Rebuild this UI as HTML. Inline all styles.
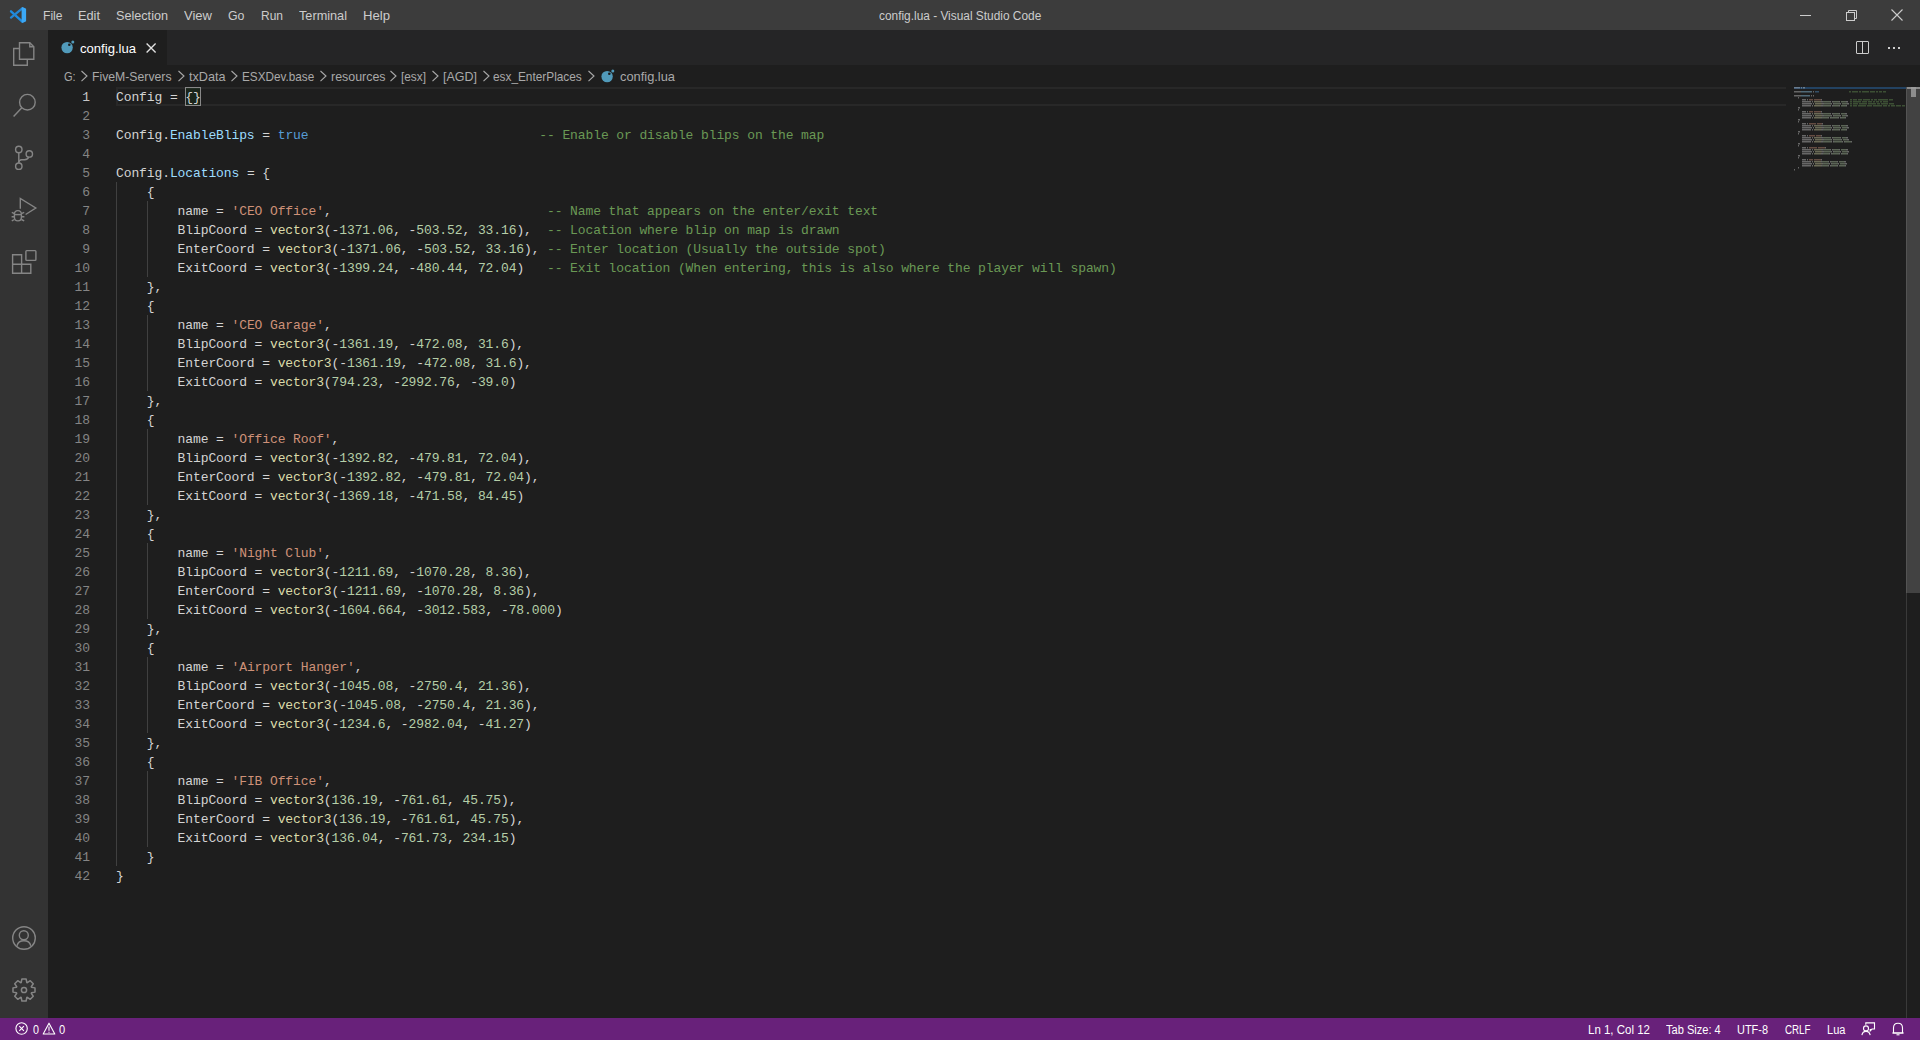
<!DOCTYPE html><html><head><meta charset="utf-8"><style>
*{margin:0;padding:0;box-sizing:border-box}
html,body{width:1920px;height:1040px;overflow:hidden;background:#1e1e1e}
body{position:relative;font-family:"Liberation Sans",sans-serif}
.abs{position:absolute}
.ui{position:absolute;white-space:pre;line-height:1;transform-origin:0 0;font-family:"Liberation Sans",sans-serif}
.code{position:absolute;left:116px;padding-top:1px;white-space:pre;font-family:"Liberation Mono",monospace;font-size:13px;letter-spacing:-0.103px;line-height:19px;height:19px;color:#d4d4d4}
.ln{position:absolute;padding-top:1px;width:40px;left:50px;text-align:right;font-family:"Liberation Mono",monospace;font-size:13px;letter-spacing:-0.103px;line-height:19px;color:#858585}
svg{position:absolute;overflow:visible}
</style></head><body>
<div class="abs" style="left:0;top:0;width:1920px;height:30px;background:#3c3c3c"></div>
<svg style="left:6px;top:3px" width="24" height="24" viewBox="6 3 24 24">
<path d="M11 11.3 L22 21.3" stroke="#1d8ce3" stroke-width="2.3" stroke-linecap="round"/>
<path d="M11 17.6 L22 8.6" stroke="#2487d4" stroke-width="2.3" stroke-linecap="round"/>
<path d="M21.6 7.4 L22.6 7 L26.1 8.7 V21.3 L22.6 23 L21.6 22.6 Z" fill="#3ba8f6"/>
</svg>
<span id="m0" class="ui" style="left:43.00px;top:9.00px;font-size:13px;color:#cccccc;font-weight:normal;transform:scaleX(0.9306);">File</span>
<span id="m1" class="ui" style="left:78.00px;top:9.00px;font-size:13px;color:#cccccc;font-weight:normal;transform:scaleX(0.9819);">Edit</span>
<span id="m2" class="ui" style="left:116.00px;top:9.00px;font-size:13px;color:#cccccc;font-weight:normal;transform:scaleX(0.9722);">Selection</span>
<span id="m3" class="ui" style="left:184.00px;top:9.00px;font-size:13px;color:#cccccc;font-weight:normal;transform:scaleX(1.0017);">View</span>
<span id="m4" class="ui" style="left:227.50px;top:9.00px;font-size:13px;color:#cccccc;font-weight:normal;transform:scaleX(0.9514);">Go</span>
<span id="m5" class="ui" style="left:260.50px;top:9.00px;font-size:13px;color:#cccccc;font-weight:normal;transform:scaleX(0.9221);">Run</span>
<span id="m6" class="ui" style="left:299.00px;top:9.00px;font-size:13px;color:#cccccc;font-weight:normal;transform:scaleX(0.9771);">Terminal</span>
<span id="m7" class="ui" style="left:363.00px;top:9.00px;font-size:13px;color:#cccccc;font-weight:normal;transform:scaleX(1.0093);">Help</span>
<span id="title" class="ui" style="left:878.75px;top:10.00px;font-size:12px;color:#cccccc;font-weight:normal;transform:scaleX(0.9900);">config.lua - Visual Studio Code</span>
<div class="abs" style="left:1800px;top:15px;width:11px;height:1px;background:#cccccc"></div>
<svg style="left:1845px;top:9px" width="13" height="13" viewBox="0 0 13 13" fill="none" stroke="#cccccc" stroke-width="1">
<rect x="1.5" y="3.5" width="8" height="8"/><path d="M3.5 3.5 V1.5 H11.5 V9.5 H9.5"/></svg>
<svg style="left:1891px;top:9px" width="13" height="13" viewBox="0 0 13 13" fill="none" stroke="#cccccc" stroke-width="1.1">
<path d="M0.5 0.5 L11.5 11.5 M11.5 0.5 L0.5 11.5"/></svg>
<div class="abs" style="left:0;top:30px;width:48px;height:988px;background:#333333"></div>
<svg style="left:12px;top:42px" width="24" height="24" viewBox="0 0 24 24" fill="none" stroke="#858585" stroke-width="1.4">
<path d="M7.5 6.5 H1.7 V23.3 H15.3 V17.3"/><path d="M7.5 0.7 V17.3 H21.8 V4.7 L17.8 0.7 Z"/><path d="M17.8 0.7 V4.7 H21.8" /></svg>
<svg style="left:12px;top:94px" width="24" height="24" viewBox="0 0 24 24" fill="none" stroke="#858585" stroke-width="1.4">
<circle cx="15.4" cy="8.2" r="7.8"/><path d="M9.8 13.8 L1.6 22.6" stroke-width="1.4"/></svg>
<svg style="left:8px;top:136px" width="32" height="40" viewBox="0 0 32 40" fill="none" stroke="#858585" stroke-width="1.4">
<circle cx="10.8" cy="13.5" r="3.2"/><circle cx="21.3" cy="17.9" r="3.2"/><circle cx="10.8" cy="30.2" r="3.2"/>
<path d="M10.8 16.7 V27"/><path d="M20.8 21 Q20 23.5 16.5 23.8 H13.5 Q11.2 24 10.8 26.5"/></svg>
<svg style="left:8px;top:190px" width="32" height="40" viewBox="0 0 32 40" fill="none" stroke="#858585" stroke-width="1.4">
<path d="M12.3 18.8 V8.5 L27.8 18 L17.6 24.5"/>
<path d="M6.4 24.5 Q6.4 20.6 9.9 20.6 Q13.4 20.6 13.4 24.5 V27.3 Q13.4 30.9 9.9 30.9 Q6.4 30.9 6.4 27.3 Z"/>
<path d="M6.4 24.6 H13.4"/><path d="M3.8 22.3 L6.4 23.6 M16.2 22.3 L13.4 23.6 M3.6 26.8 H6.4 M13.4 26.8 H16.4 M3.8 30.9 L6.4 29.5 M16.2 30.9 L13.4 29.5"/></svg>
<svg style="left:8px;top:242px" width="32" height="40" viewBox="0 0 32 40" fill="none" stroke="#858585" stroke-width="1.4">
<path d="M4.6 12.8 H13.6 V22.3 H22.8 V31.2 H4.6 Z"/><path d="M4.6 22.3 H13.6 V31.2"/>
<rect x="17.9" y="8.6" width="10" height="9.8" rx="0.8"/></svg>
<svg style="left:12px;top:926px" width="24" height="24" viewBox="0 0 24 24" fill="none" stroke="#858585" stroke-width="1.4">
<circle cx="12" cy="12" r="11.3"/><circle cx="11.8" cy="9.3" r="4.5"/><path d="M5 19.7 Q6.3 14.8 11.9 14.8 Q17.5 14.8 18.8 19.7"/></svg>
<svg style="left:12px;top:978px" width="24" height="24" viewBox="0 0 24 24" fill="none" stroke="#858585" stroke-width="1.5">
<path d="M9.18 4.51 L9.88 1.00 L14.12 1.00 L14.82 4.51 L15.30 4.71 L18.28 2.73 L21.27 5.72 L19.29 8.70 L19.49 9.18 L23.00 9.88 L23.00 14.12 L19.49 14.82 L19.29 15.30 L21.27 18.28 L18.28 21.27 L15.30 19.29 L14.82 19.49 L14.12 23.00 L9.88 23.00 L9.18 19.49 L8.70 19.29 L5.72 21.27 L2.73 18.28 L4.71 15.30 L4.51 14.82 L1.00 14.12 L1.00 9.88 L4.51 9.18 L4.71 8.70 L2.73 5.72 L5.72 2.73 L8.70 4.71 Z" stroke-linejoin="round"/><circle cx="12" cy="12" r="2.6"/></svg>
<div class="abs" style="left:48px;top:30px;width:1872px;height:35px;background:#252526"></div>
<div class="abs" style="left:48px;top:30px;width:119px;height:35px;background:#1e1e1e"></div>
<svg style="left:61px;top:40px" width="14" height="14" viewBox="0 0 14 14">
<circle cx="6.1" cy="7.6" r="5.7" fill="#519aba"/><circle cx="8.3" cy="4.8" r="1.3" fill="#1e1e1e"/><circle cx="11.8" cy="1.9" r="1.5" fill="#519aba"/></svg>
<span id="tabname" class="ui" style="left:80.00px;top:42.00px;font-size:13px;color:#ffffff;font-weight:normal;transform:scaleX(1.0062);">config.lua</span>
<svg style="left:145px;top:42px" width="12" height="12" viewBox="0 0 12 12" fill="none" stroke="#e0e0e0" stroke-width="1.35">
<path d="M1.6 1.6 L10.6 10.6 M10.6 1.6 L1.6 10.6"/></svg>
<svg style="left:1855px;top:40px" width="15" height="15" viewBox="0 0 15 15" fill="none" stroke="#cccccc" stroke-width="1">
<rect x="1.5" y="1.5" width="12" height="12" rx="0.5"/><path d="M7.5 1.5 V13.5"/></svg>
<div class="abs" style="left:1888px;top:47px;width:2px;height:2px;background:#cccccc"></div>
<div class="abs" style="left:1893px;top:47px;width:2px;height:2px;background:#cccccc"></div>
<div class="abs" style="left:1898px;top:47px;width:2px;height:2px;background:#cccccc"></div>
<span id="bc0" class="ui" style="left:64.00px;top:70.00px;font-size:13px;color:#a9a9a9;font-weight:normal;transform:scaleX(0.8519);">G:</span>
<span id="bc1" class="ui" style="left:92.30px;top:70.00px;font-size:13px;color:#a9a9a9;font-weight:normal;transform:scaleX(0.9407);">FiveM-Servers</span>
<span id="bc2" class="ui" style="left:188.50px;top:70.00px;font-size:13px;color:#a9a9a9;font-weight:normal;transform:scaleX(0.9713);">txData</span>
<span id="bc3" class="ui" style="left:241.80px;top:70.00px;font-size:13px;color:#a9a9a9;font-weight:normal;transform:scaleX(0.9029);">ESXDev.base</span>
<span id="bc4" class="ui" style="left:330.70px;top:70.00px;font-size:13px;color:#a9a9a9;font-weight:normal;transform:scaleX(0.9548);">resources</span>
<span id="bc5" class="ui" style="left:401.00px;top:70.00px;font-size:13px;color:#a9a9a9;font-weight:normal;transform:scaleX(0.9101);">[esx]</span>
<span id="bc6" class="ui" style="left:443.00px;top:70.00px;font-size:13px;color:#a9a9a9;font-weight:normal;transform:scaleX(0.9603);">[AGD]</span>
<span id="bc7" class="ui" style="left:493.00px;top:70.00px;font-size:13px;color:#a9a9a9;font-weight:normal;transform:scaleX(0.9097);">esx_EnterPlaces</span>
<svg style="left:81.0px;top:70px" width="8" height="12" viewBox="0 0 8 12" fill="none" stroke="#a9a9a9" stroke-width="1.1"><path d="M0.5 1 L6 6 L0.5 11.2"/></svg>
<svg style="left:177.7px;top:70px" width="8" height="12" viewBox="0 0 8 12" fill="none" stroke="#a9a9a9" stroke-width="1.1"><path d="M0.5 1 L6 6 L0.5 11.2"/></svg>
<svg style="left:231.0px;top:70px" width="8" height="12" viewBox="0 0 8 12" fill="none" stroke="#a9a9a9" stroke-width="1.1"><path d="M0.5 1 L6 6 L0.5 11.2"/></svg>
<svg style="left:320.0px;top:70px" width="8" height="12" viewBox="0 0 8 12" fill="none" stroke="#a9a9a9" stroke-width="1.1"><path d="M0.5 1 L6 6 L0.5 11.2"/></svg>
<svg style="left:390.0px;top:70px" width="8" height="12" viewBox="0 0 8 12" fill="none" stroke="#a9a9a9" stroke-width="1.1"><path d="M0.5 1 L6 6 L0.5 11.2"/></svg>
<svg style="left:432.0px;top:70px" width="8" height="12" viewBox="0 0 8 12" fill="none" stroke="#a9a9a9" stroke-width="1.1"><path d="M0.5 1 L6 6 L0.5 11.2"/></svg>
<svg style="left:482.5px;top:70px" width="8" height="12" viewBox="0 0 8 12" fill="none" stroke="#a9a9a9" stroke-width="1.1"><path d="M0.5 1 L6 6 L0.5 11.2"/></svg>
<svg style="left:587.5px;top:70px" width="8" height="12" viewBox="0 0 8 12" fill="none" stroke="#a9a9a9" stroke-width="1.1"><path d="M0.5 1 L6 6 L0.5 11.2"/></svg>
<svg style="left:600.5px;top:69px" width="14" height="14" viewBox="0 0 14 14">
<circle cx="6.1" cy="7.6" r="5.7" fill="#519aba"/><circle cx="8.3" cy="4.8" r="1.3" fill="#1e1e1e"/><circle cx="11.8" cy="1.9" r="1.5" fill="#519aba"/></svg>
<span id="bcfile" class="ui" style="left:620.00px;top:70.00px;font-size:13px;color:#a9a9a9;font-weight:normal;transform:scaleX(0.9882);">config.lua</span>
<div class="abs" style="left:116px;top:87px;width:1700px;height:19px;border:2px solid #282828"></div>
<div class="abs" style="left:185px;top:87px;width:16px;height:19px;border:1px solid #888888;background:rgba(0,100,0,0.1)"></div>
<div class="abs" style="left:116px;top:182px;width:1px;height:19px;background:#404040"></div>
<div class="abs" style="left:116px;top:201px;width:1px;height:19px;background:#404040"></div>
<div class="abs" style="left:147px;top:201px;width:1px;height:19px;background:#404040"></div>
<div class="abs" style="left:116px;top:220px;width:1px;height:19px;background:#404040"></div>
<div class="abs" style="left:147px;top:220px;width:1px;height:19px;background:#404040"></div>
<div class="abs" style="left:116px;top:239px;width:1px;height:19px;background:#404040"></div>
<div class="abs" style="left:147px;top:239px;width:1px;height:19px;background:#404040"></div>
<div class="abs" style="left:116px;top:258px;width:1px;height:19px;background:#404040"></div>
<div class="abs" style="left:147px;top:258px;width:1px;height:19px;background:#404040"></div>
<div class="abs" style="left:116px;top:277px;width:1px;height:19px;background:#404040"></div>
<div class="abs" style="left:116px;top:296px;width:1px;height:19px;background:#404040"></div>
<div class="abs" style="left:116px;top:315px;width:1px;height:19px;background:#404040"></div>
<div class="abs" style="left:147px;top:315px;width:1px;height:19px;background:#404040"></div>
<div class="abs" style="left:116px;top:334px;width:1px;height:19px;background:#404040"></div>
<div class="abs" style="left:147px;top:334px;width:1px;height:19px;background:#404040"></div>
<div class="abs" style="left:116px;top:353px;width:1px;height:19px;background:#404040"></div>
<div class="abs" style="left:147px;top:353px;width:1px;height:19px;background:#404040"></div>
<div class="abs" style="left:116px;top:372px;width:1px;height:19px;background:#404040"></div>
<div class="abs" style="left:147px;top:372px;width:1px;height:19px;background:#404040"></div>
<div class="abs" style="left:116px;top:391px;width:1px;height:19px;background:#404040"></div>
<div class="abs" style="left:116px;top:410px;width:1px;height:19px;background:#404040"></div>
<div class="abs" style="left:116px;top:429px;width:1px;height:19px;background:#404040"></div>
<div class="abs" style="left:147px;top:429px;width:1px;height:19px;background:#404040"></div>
<div class="abs" style="left:116px;top:448px;width:1px;height:19px;background:#404040"></div>
<div class="abs" style="left:147px;top:448px;width:1px;height:19px;background:#404040"></div>
<div class="abs" style="left:116px;top:467px;width:1px;height:19px;background:#404040"></div>
<div class="abs" style="left:147px;top:467px;width:1px;height:19px;background:#404040"></div>
<div class="abs" style="left:116px;top:486px;width:1px;height:19px;background:#404040"></div>
<div class="abs" style="left:147px;top:486px;width:1px;height:19px;background:#404040"></div>
<div class="abs" style="left:116px;top:505px;width:1px;height:19px;background:#404040"></div>
<div class="abs" style="left:116px;top:524px;width:1px;height:19px;background:#404040"></div>
<div class="abs" style="left:116px;top:543px;width:1px;height:19px;background:#404040"></div>
<div class="abs" style="left:147px;top:543px;width:1px;height:19px;background:#404040"></div>
<div class="abs" style="left:116px;top:562px;width:1px;height:19px;background:#404040"></div>
<div class="abs" style="left:147px;top:562px;width:1px;height:19px;background:#404040"></div>
<div class="abs" style="left:116px;top:581px;width:1px;height:19px;background:#404040"></div>
<div class="abs" style="left:147px;top:581px;width:1px;height:19px;background:#404040"></div>
<div class="abs" style="left:116px;top:600px;width:1px;height:19px;background:#404040"></div>
<div class="abs" style="left:147px;top:600px;width:1px;height:19px;background:#404040"></div>
<div class="abs" style="left:116px;top:619px;width:1px;height:19px;background:#404040"></div>
<div class="abs" style="left:116px;top:638px;width:1px;height:19px;background:#404040"></div>
<div class="abs" style="left:116px;top:657px;width:1px;height:19px;background:#404040"></div>
<div class="abs" style="left:147px;top:657px;width:1px;height:19px;background:#404040"></div>
<div class="abs" style="left:116px;top:676px;width:1px;height:19px;background:#404040"></div>
<div class="abs" style="left:147px;top:676px;width:1px;height:19px;background:#404040"></div>
<div class="abs" style="left:116px;top:695px;width:1px;height:19px;background:#404040"></div>
<div class="abs" style="left:147px;top:695px;width:1px;height:19px;background:#404040"></div>
<div class="abs" style="left:116px;top:714px;width:1px;height:19px;background:#404040"></div>
<div class="abs" style="left:147px;top:714px;width:1px;height:19px;background:#404040"></div>
<div class="abs" style="left:116px;top:733px;width:1px;height:19px;background:#404040"></div>
<div class="abs" style="left:116px;top:752px;width:1px;height:19px;background:#404040"></div>
<div class="abs" style="left:116px;top:771px;width:1px;height:19px;background:#404040"></div>
<div class="abs" style="left:147px;top:771px;width:1px;height:19px;background:#404040"></div>
<div class="abs" style="left:116px;top:790px;width:1px;height:19px;background:#404040"></div>
<div class="abs" style="left:147px;top:790px;width:1px;height:19px;background:#404040"></div>
<div class="abs" style="left:116px;top:809px;width:1px;height:19px;background:#404040"></div>
<div class="abs" style="left:147px;top:809px;width:1px;height:19px;background:#404040"></div>
<div class="abs" style="left:116px;top:828px;width:1px;height:19px;background:#404040"></div>
<div class="abs" style="left:147px;top:828px;width:1px;height:19px;background:#404040"></div>
<div class="abs" style="left:116px;top:847px;width:1px;height:19px;background:#404040"></div>
<div class="ln" style="top:87px;color:#c6c6c6">1</div>
<div class="ln" style="top:106px;color:#858585">2</div>
<div class="ln" style="top:125px;color:#858585">3</div>
<div class="ln" style="top:144px;color:#858585">4</div>
<div class="ln" style="top:163px;color:#858585">5</div>
<div class="ln" style="top:182px;color:#858585">6</div>
<div class="ln" style="top:201px;color:#858585">7</div>
<div class="ln" style="top:220px;color:#858585">8</div>
<div class="ln" style="top:239px;color:#858585">9</div>
<div class="ln" style="top:258px;color:#858585">10</div>
<div class="ln" style="top:277px;color:#858585">11</div>
<div class="ln" style="top:296px;color:#858585">12</div>
<div class="ln" style="top:315px;color:#858585">13</div>
<div class="ln" style="top:334px;color:#858585">14</div>
<div class="ln" style="top:353px;color:#858585">15</div>
<div class="ln" style="top:372px;color:#858585">16</div>
<div class="ln" style="top:391px;color:#858585">17</div>
<div class="ln" style="top:410px;color:#858585">18</div>
<div class="ln" style="top:429px;color:#858585">19</div>
<div class="ln" style="top:448px;color:#858585">20</div>
<div class="ln" style="top:467px;color:#858585">21</div>
<div class="ln" style="top:486px;color:#858585">22</div>
<div class="ln" style="top:505px;color:#858585">23</div>
<div class="ln" style="top:524px;color:#858585">24</div>
<div class="ln" style="top:543px;color:#858585">25</div>
<div class="ln" style="top:562px;color:#858585">26</div>
<div class="ln" style="top:581px;color:#858585">27</div>
<div class="ln" style="top:600px;color:#858585">28</div>
<div class="ln" style="top:619px;color:#858585">29</div>
<div class="ln" style="top:638px;color:#858585">30</div>
<div class="ln" style="top:657px;color:#858585">31</div>
<div class="ln" style="top:676px;color:#858585">32</div>
<div class="ln" style="top:695px;color:#858585">33</div>
<div class="ln" style="top:714px;color:#858585">34</div>
<div class="ln" style="top:733px;color:#858585">35</div>
<div class="ln" style="top:752px;color:#858585">36</div>
<div class="ln" style="top:771px;color:#858585">37</div>
<div class="ln" style="top:790px;color:#858585">38</div>
<div class="ln" style="top:809px;color:#858585">39</div>
<div class="ln" style="top:828px;color:#858585">40</div>
<div class="ln" style="top:847px;color:#858585">41</div>
<div class="ln" style="top:866px;color:#858585">42</div>
<div class="code" style="top:87px">Config = {}</div>
<div class="code" style="top:106px"></div>
<div class="code" style="top:125px">Config.<span style="color:#9cdcfe">EnableBlips</span> = <span style="color:#569cd6">true</span></div>
<div class="code" style="top:125px;left:539.34px;color:#6a9955">-- Enable or disable blips on the map</div>
<div class="code" style="top:144px"></div>
<div class="code" style="top:163px">Config.<span style="color:#9cdcfe">Locations</span> = {</div>
<div class="code" style="top:182px">    {</div>
<div class="code" style="top:201px">        name = <span style="color:#ce9178">&#x27;CEO Office&#x27;</span>,</div>
<div class="code" style="top:201px;left:547.03px;color:#6a9955">-- Name that appears on the enter/exit text</div>
<div class="code" style="top:220px">        BlipCoord = <span style="color:#dcdcaa">vector3</span>(-<span style="color:#b5cea8">1371.06</span>, -<span style="color:#b5cea8">503.52</span>, <span style="color:#b5cea8">33.16</span>),</div>
<div class="code" style="top:220px;left:547.03px;color:#6a9955">-- Location where blip on map is drawn</div>
<div class="code" style="top:239px">        EnterCoord = <span style="color:#dcdcaa">vector3</span>(-<span style="color:#b5cea8">1371.06</span>, -<span style="color:#b5cea8">503.52</span>, <span style="color:#b5cea8">33.16</span>),</div>
<div class="code" style="top:239px;left:547.03px;color:#6a9955">-- Enter location (Usually the outside spot)</div>
<div class="code" style="top:258px">        ExitCoord = <span style="color:#dcdcaa">vector3</span>(-<span style="color:#b5cea8">1399.24</span>, -<span style="color:#b5cea8">480.44</span>, <span style="color:#b5cea8">72.04</span>)</div>
<div class="code" style="top:258px;left:547.03px;color:#6a9955">-- Exit location (When entering, this is also where the player will spawn)</div>
<div class="code" style="top:277px">    },</div>
<div class="code" style="top:296px">    {</div>
<div class="code" style="top:315px">        name = <span style="color:#ce9178">&#x27;CEO Garage&#x27;</span>,</div>
<div class="code" style="top:334px">        BlipCoord = <span style="color:#dcdcaa">vector3</span>(-<span style="color:#b5cea8">1361.19</span>, -<span style="color:#b5cea8">472.08</span>, <span style="color:#b5cea8">31.6</span>),</div>
<div class="code" style="top:353px">        EnterCoord = <span style="color:#dcdcaa">vector3</span>(-<span style="color:#b5cea8">1361.19</span>, -<span style="color:#b5cea8">472.08</span>, <span style="color:#b5cea8">31.6</span>),</div>
<div class="code" style="top:372px">        ExitCoord = <span style="color:#dcdcaa">vector3</span>(<span style="color:#b5cea8">794.23</span>, -<span style="color:#b5cea8">2992.76</span>, -<span style="color:#b5cea8">39.0</span>)</div>
<div class="code" style="top:391px">    },</div>
<div class="code" style="top:410px">    {</div>
<div class="code" style="top:429px">        name = <span style="color:#ce9178">&#x27;Office Roof&#x27;</span>,</div>
<div class="code" style="top:448px">        BlipCoord = <span style="color:#dcdcaa">vector3</span>(-<span style="color:#b5cea8">1392.82</span>, -<span style="color:#b5cea8">479.81</span>, <span style="color:#b5cea8">72.04</span>),</div>
<div class="code" style="top:467px">        EnterCoord = <span style="color:#dcdcaa">vector3</span>(-<span style="color:#b5cea8">1392.82</span>, -<span style="color:#b5cea8">479.81</span>, <span style="color:#b5cea8">72.04</span>),</div>
<div class="code" style="top:486px">        ExitCoord = <span style="color:#dcdcaa">vector3</span>(-<span style="color:#b5cea8">1369.18</span>, -<span style="color:#b5cea8">471.58</span>, <span style="color:#b5cea8">84.45</span>)</div>
<div class="code" style="top:505px">    },</div>
<div class="code" style="top:524px">    {</div>
<div class="code" style="top:543px">        name = <span style="color:#ce9178">&#x27;Night Club&#x27;</span>,</div>
<div class="code" style="top:562px">        BlipCoord = <span style="color:#dcdcaa">vector3</span>(-<span style="color:#b5cea8">1211.69</span>, -<span style="color:#b5cea8">1070.28</span>, <span style="color:#b5cea8">8.36</span>),</div>
<div class="code" style="top:581px">        EnterCoord = <span style="color:#dcdcaa">vector3</span>(-<span style="color:#b5cea8">1211.69</span>, -<span style="color:#b5cea8">1070.28</span>, <span style="color:#b5cea8">8.36</span>),</div>
<div class="code" style="top:600px">        ExitCoord = <span style="color:#dcdcaa">vector3</span>(-<span style="color:#b5cea8">1604.664</span>, -<span style="color:#b5cea8">3012.583</span>, -<span style="color:#b5cea8">78.000</span>)</div>
<div class="code" style="top:619px">    },</div>
<div class="code" style="top:638px">    {</div>
<div class="code" style="top:657px">        name = <span style="color:#ce9178">&#x27;Airport Hanger&#x27;</span>,</div>
<div class="code" style="top:676px">        BlipCoord = <span style="color:#dcdcaa">vector3</span>(-<span style="color:#b5cea8">1045.08</span>, -<span style="color:#b5cea8">2750.4</span>, <span style="color:#b5cea8">21.36</span>),</div>
<div class="code" style="top:695px">        EnterCoord = <span style="color:#dcdcaa">vector3</span>(-<span style="color:#b5cea8">1045.08</span>, -<span style="color:#b5cea8">2750.4</span>, <span style="color:#b5cea8">21.36</span>),</div>
<div class="code" style="top:714px">        ExitCoord = <span style="color:#dcdcaa">vector3</span>(-<span style="color:#b5cea8">1234.6</span>, -<span style="color:#b5cea8">2982.04</span>, -<span style="color:#b5cea8">41.27</span>)</div>
<div class="code" style="top:733px">    },</div>
<div class="code" style="top:752px">    {</div>
<div class="code" style="top:771px">        name = <span style="color:#ce9178">&#x27;FIB Office&#x27;</span>,</div>
<div class="code" style="top:790px">        BlipCoord = <span style="color:#dcdcaa">vector3</span>(<span style="color:#b5cea8">136.19</span>, -<span style="color:#b5cea8">761.61</span>, <span style="color:#b5cea8">45.75</span>),</div>
<div class="code" style="top:809px">        EnterCoord = <span style="color:#dcdcaa">vector3</span>(<span style="color:#b5cea8">136.19</span>, -<span style="color:#b5cea8">761.61</span>, <span style="color:#b5cea8">45.75</span>),</div>
<div class="code" style="top:828px">        ExitCoord = <span style="color:#dcdcaa">vector3</span>(<span style="color:#b5cea8">136.04</span>, -<span style="color:#b5cea8">761.73</span>, <span style="color:#b5cea8">234.15</span>)</div>
<div class="code" style="top:847px">    }</div>
<div class="code" style="top:866px">}</div>
<div class="abs" style="left:1786px;top:87px;width:120px;height:931px;background:#1e1e1e"></div>
<svg style="left:1794px;top:87px;overflow:hidden" width="112" height="90"><g><rect x="0" y="0" width="112" height="2" fill="#264f78" opacity="0.75"/><rect x="0" y="0" width="6" height="1.5" fill="#d4d4d4" opacity="0.4"/><rect x="7" y="0" width="1" height="1.5" fill="#d4d4d4" opacity="0.4"/><rect x="9" y="0" width="2" height="1.5" fill="#d4d4d4" opacity="0.4"/><rect x="0" y="4" width="7" height="1.5" fill="#d4d4d4" opacity="0.4"/><rect x="7" y="4" width="11" height="1.5" fill="#9cdcfe" opacity="0.4"/><rect x="19" y="4" width="1" height="1.5" fill="#d4d4d4" opacity="0.4"/><rect x="21" y="4" width="4" height="1.5" fill="#569cd6" opacity="0.4"/><rect x="55" y="4" width="2" height="1.5" fill="#6a9955" opacity="0.4"/><rect x="58" y="4" width="6" height="1.5" fill="#6a9955" opacity="0.4"/><rect x="65" y="4" width="2" height="1.5" fill="#6a9955" opacity="0.4"/><rect x="68" y="4" width="7" height="1.5" fill="#6a9955" opacity="0.4"/><rect x="76" y="4" width="5" height="1.5" fill="#6a9955" opacity="0.4"/><rect x="82" y="4" width="2" height="1.5" fill="#6a9955" opacity="0.4"/><rect x="85" y="4" width="3" height="1.5" fill="#6a9955" opacity="0.4"/><rect x="89" y="4" width="3" height="1.5" fill="#6a9955" opacity="0.4"/><rect x="0" y="8" width="7" height="1.5" fill="#d4d4d4" opacity="0.4"/><rect x="7" y="8" width="9" height="1.5" fill="#9cdcfe" opacity="0.4"/><rect x="17" y="8" width="1" height="1.5" fill="#d4d4d4" opacity="0.4"/><rect x="19" y="8" width="1" height="1.5" fill="#d4d4d4" opacity="0.4"/><rect x="4" y="10" width="1" height="1.5" fill="#d4d4d4" opacity="0.4"/><rect x="8" y="12" width="4" height="1.5" fill="#d4d4d4" opacity="0.4"/><rect x="13" y="12" width="1" height="1.5" fill="#d4d4d4" opacity="0.4"/><rect x="15" y="12" width="4" height="1.5" fill="#ce9178" opacity="0.4"/><rect x="20" y="12" width="7" height="1.5" fill="#ce9178" opacity="0.4"/><rect x="27" y="12" width="1" height="1.5" fill="#d4d4d4" opacity="0.4"/><rect x="56" y="12" width="2" height="1.5" fill="#6a9955" opacity="0.4"/><rect x="59" y="12" width="4" height="1.5" fill="#6a9955" opacity="0.4"/><rect x="64" y="12" width="4" height="1.5" fill="#6a9955" opacity="0.4"/><rect x="69" y="12" width="7" height="1.5" fill="#6a9955" opacity="0.4"/><rect x="77" y="12" width="2" height="1.5" fill="#6a9955" opacity="0.4"/><rect x="80" y="12" width="3" height="1.5" fill="#6a9955" opacity="0.4"/><rect x="84" y="12" width="10" height="1.5" fill="#6a9955" opacity="0.4"/><rect x="95" y="12" width="4" height="1.5" fill="#6a9955" opacity="0.4"/><rect x="8" y="14" width="9" height="1.5" fill="#d4d4d4" opacity="0.4"/><rect x="18" y="14" width="1" height="1.5" fill="#d4d4d4" opacity="0.4"/><rect x="20" y="14" width="7" height="1.5" fill="#dcdcaa" opacity="0.4"/><rect x="27" y="14" width="2" height="1.5" fill="#d4d4d4" opacity="0.4"/><rect x="29" y="14" width="7" height="1.5" fill="#b5cea8" opacity="0.4"/><rect x="36" y="14" width="1" height="1.5" fill="#d4d4d4" opacity="0.4"/><rect x="38" y="14" width="1" height="1.5" fill="#d4d4d4" opacity="0.4"/><rect x="39" y="14" width="6" height="1.5" fill="#b5cea8" opacity="0.4"/><rect x="45" y="14" width="1" height="1.5" fill="#d4d4d4" opacity="0.4"/><rect x="47" y="14" width="5" height="1.5" fill="#b5cea8" opacity="0.4"/><rect x="52" y="14" width="2" height="1.5" fill="#d4d4d4" opacity="0.4"/><rect x="56" y="14" width="2" height="1.5" fill="#6a9955" opacity="0.4"/><rect x="59" y="14" width="8" height="1.5" fill="#6a9955" opacity="0.4"/><rect x="68" y="14" width="5" height="1.5" fill="#6a9955" opacity="0.4"/><rect x="74" y="14" width="4" height="1.5" fill="#6a9955" opacity="0.4"/><rect x="79" y="14" width="2" height="1.5" fill="#6a9955" opacity="0.4"/><rect x="82" y="14" width="3" height="1.5" fill="#6a9955" opacity="0.4"/><rect x="86" y="14" width="2" height="1.5" fill="#6a9955" opacity="0.4"/><rect x="89" y="14" width="5" height="1.5" fill="#6a9955" opacity="0.4"/><rect x="8" y="16" width="10" height="1.5" fill="#d4d4d4" opacity="0.4"/><rect x="19" y="16" width="1" height="1.5" fill="#d4d4d4" opacity="0.4"/><rect x="21" y="16" width="7" height="1.5" fill="#dcdcaa" opacity="0.4"/><rect x="28" y="16" width="2" height="1.5" fill="#d4d4d4" opacity="0.4"/><rect x="30" y="16" width="7" height="1.5" fill="#b5cea8" opacity="0.4"/><rect x="37" y="16" width="1" height="1.5" fill="#d4d4d4" opacity="0.4"/><rect x="39" y="16" width="1" height="1.5" fill="#d4d4d4" opacity="0.4"/><rect x="40" y="16" width="6" height="1.5" fill="#b5cea8" opacity="0.4"/><rect x="46" y="16" width="1" height="1.5" fill="#d4d4d4" opacity="0.4"/><rect x="48" y="16" width="5" height="1.5" fill="#b5cea8" opacity="0.4"/><rect x="53" y="16" width="2" height="1.5" fill="#d4d4d4" opacity="0.4"/><rect x="56" y="16" width="2" height="1.5" fill="#6a9955" opacity="0.4"/><rect x="59" y="16" width="5" height="1.5" fill="#6a9955" opacity="0.4"/><rect x="65" y="16" width="8" height="1.5" fill="#6a9955" opacity="0.4"/><rect x="74" y="16" width="8" height="1.5" fill="#6a9955" opacity="0.4"/><rect x="83" y="16" width="3" height="1.5" fill="#6a9955" opacity="0.4"/><rect x="87" y="16" width="7" height="1.5" fill="#6a9955" opacity="0.4"/><rect x="95" y="16" width="5" height="1.5" fill="#6a9955" opacity="0.4"/><rect x="8" y="18" width="9" height="1.5" fill="#d4d4d4" opacity="0.4"/><rect x="18" y="18" width="1" height="1.5" fill="#d4d4d4" opacity="0.4"/><rect x="20" y="18" width="7" height="1.5" fill="#dcdcaa" opacity="0.4"/><rect x="27" y="18" width="2" height="1.5" fill="#d4d4d4" opacity="0.4"/><rect x="29" y="18" width="7" height="1.5" fill="#b5cea8" opacity="0.4"/><rect x="36" y="18" width="1" height="1.5" fill="#d4d4d4" opacity="0.4"/><rect x="38" y="18" width="1" height="1.5" fill="#d4d4d4" opacity="0.4"/><rect x="39" y="18" width="6" height="1.5" fill="#b5cea8" opacity="0.4"/><rect x="45" y="18" width="1" height="1.5" fill="#d4d4d4" opacity="0.4"/><rect x="47" y="18" width="5" height="1.5" fill="#b5cea8" opacity="0.4"/><rect x="52" y="18" width="1" height="1.5" fill="#d4d4d4" opacity="0.4"/><rect x="56" y="18" width="2" height="1.5" fill="#6a9955" opacity="0.4"/><rect x="59" y="18" width="4" height="1.5" fill="#6a9955" opacity="0.4"/><rect x="64" y="18" width="8" height="1.5" fill="#6a9955" opacity="0.4"/><rect x="73" y="18" width="5" height="1.5" fill="#6a9955" opacity="0.4"/><rect x="79" y="18" width="9" height="1.5" fill="#6a9955" opacity="0.4"/><rect x="89" y="18" width="4" height="1.5" fill="#6a9955" opacity="0.4"/><rect x="94" y="18" width="2" height="1.5" fill="#6a9955" opacity="0.4"/><rect x="97" y="18" width="4" height="1.5" fill="#6a9955" opacity="0.4"/><rect x="102" y="18" width="5" height="1.5" fill="#6a9955" opacity="0.4"/><rect x="108" y="18" width="3" height="1.5" fill="#6a9955" opacity="0.4"/><rect x="112" y="18" width="6" height="1.5" fill="#6a9955" opacity="0.4"/><rect x="119" y="18" width="4" height="1.5" fill="#6a9955" opacity="0.4"/><rect x="124" y="18" width="6" height="1.5" fill="#6a9955" opacity="0.4"/><rect x="4" y="20" width="2" height="1.5" fill="#d4d4d4" opacity="0.4"/><rect x="4" y="22" width="1" height="1.5" fill="#d4d4d4" opacity="0.4"/><rect x="8" y="24" width="4" height="1.5" fill="#d4d4d4" opacity="0.4"/><rect x="13" y="24" width="1" height="1.5" fill="#d4d4d4" opacity="0.4"/><rect x="15" y="24" width="4" height="1.5" fill="#ce9178" opacity="0.4"/><rect x="20" y="24" width="7" height="1.5" fill="#ce9178" opacity="0.4"/><rect x="27" y="24" width="1" height="1.5" fill="#d4d4d4" opacity="0.4"/><rect x="8" y="26" width="9" height="1.5" fill="#d4d4d4" opacity="0.4"/><rect x="18" y="26" width="1" height="1.5" fill="#d4d4d4" opacity="0.4"/><rect x="20" y="26" width="7" height="1.5" fill="#dcdcaa" opacity="0.4"/><rect x="27" y="26" width="2" height="1.5" fill="#d4d4d4" opacity="0.4"/><rect x="29" y="26" width="7" height="1.5" fill="#b5cea8" opacity="0.4"/><rect x="36" y="26" width="1" height="1.5" fill="#d4d4d4" opacity="0.4"/><rect x="38" y="26" width="1" height="1.5" fill="#d4d4d4" opacity="0.4"/><rect x="39" y="26" width="6" height="1.5" fill="#b5cea8" opacity="0.4"/><rect x="45" y="26" width="1" height="1.5" fill="#d4d4d4" opacity="0.4"/><rect x="47" y="26" width="4" height="1.5" fill="#b5cea8" opacity="0.4"/><rect x="51" y="26" width="2" height="1.5" fill="#d4d4d4" opacity="0.4"/><rect x="8" y="28" width="10" height="1.5" fill="#d4d4d4" opacity="0.4"/><rect x="19" y="28" width="1" height="1.5" fill="#d4d4d4" opacity="0.4"/><rect x="21" y="28" width="7" height="1.5" fill="#dcdcaa" opacity="0.4"/><rect x="28" y="28" width="2" height="1.5" fill="#d4d4d4" opacity="0.4"/><rect x="30" y="28" width="7" height="1.5" fill="#b5cea8" opacity="0.4"/><rect x="37" y="28" width="1" height="1.5" fill="#d4d4d4" opacity="0.4"/><rect x="39" y="28" width="1" height="1.5" fill="#d4d4d4" opacity="0.4"/><rect x="40" y="28" width="6" height="1.5" fill="#b5cea8" opacity="0.4"/><rect x="46" y="28" width="1" height="1.5" fill="#d4d4d4" opacity="0.4"/><rect x="48" y="28" width="4" height="1.5" fill="#b5cea8" opacity="0.4"/><rect x="52" y="28" width="2" height="1.5" fill="#d4d4d4" opacity="0.4"/><rect x="8" y="30" width="9" height="1.5" fill="#d4d4d4" opacity="0.4"/><rect x="18" y="30" width="1" height="1.5" fill="#d4d4d4" opacity="0.4"/><rect x="20" y="30" width="7" height="1.5" fill="#dcdcaa" opacity="0.4"/><rect x="27" y="30" width="1" height="1.5" fill="#d4d4d4" opacity="0.4"/><rect x="28" y="30" width="6" height="1.5" fill="#b5cea8" opacity="0.4"/><rect x="34" y="30" width="1" height="1.5" fill="#d4d4d4" opacity="0.4"/><rect x="36" y="30" width="1" height="1.5" fill="#d4d4d4" opacity="0.4"/><rect x="37" y="30" width="7" height="1.5" fill="#b5cea8" opacity="0.4"/><rect x="44" y="30" width="1" height="1.5" fill="#d4d4d4" opacity="0.4"/><rect x="46" y="30" width="1" height="1.5" fill="#d4d4d4" opacity="0.4"/><rect x="47" y="30" width="4" height="1.5" fill="#b5cea8" opacity="0.4"/><rect x="51" y="30" width="1" height="1.5" fill="#d4d4d4" opacity="0.4"/><rect x="4" y="32" width="2" height="1.5" fill="#d4d4d4" opacity="0.4"/><rect x="4" y="34" width="1" height="1.5" fill="#d4d4d4" opacity="0.4"/><rect x="8" y="36" width="4" height="1.5" fill="#d4d4d4" opacity="0.4"/><rect x="13" y="36" width="1" height="1.5" fill="#d4d4d4" opacity="0.4"/><rect x="15" y="36" width="7" height="1.5" fill="#ce9178" opacity="0.4"/><rect x="23" y="36" width="5" height="1.5" fill="#ce9178" opacity="0.4"/><rect x="28" y="36" width="1" height="1.5" fill="#d4d4d4" opacity="0.4"/><rect x="8" y="38" width="9" height="1.5" fill="#d4d4d4" opacity="0.4"/><rect x="18" y="38" width="1" height="1.5" fill="#d4d4d4" opacity="0.4"/><rect x="20" y="38" width="7" height="1.5" fill="#dcdcaa" opacity="0.4"/><rect x="27" y="38" width="2" height="1.5" fill="#d4d4d4" opacity="0.4"/><rect x="29" y="38" width="7" height="1.5" fill="#b5cea8" opacity="0.4"/><rect x="36" y="38" width="1" height="1.5" fill="#d4d4d4" opacity="0.4"/><rect x="38" y="38" width="1" height="1.5" fill="#d4d4d4" opacity="0.4"/><rect x="39" y="38" width="6" height="1.5" fill="#b5cea8" opacity="0.4"/><rect x="45" y="38" width="1" height="1.5" fill="#d4d4d4" opacity="0.4"/><rect x="47" y="38" width="5" height="1.5" fill="#b5cea8" opacity="0.4"/><rect x="52" y="38" width="2" height="1.5" fill="#d4d4d4" opacity="0.4"/><rect x="8" y="40" width="10" height="1.5" fill="#d4d4d4" opacity="0.4"/><rect x="19" y="40" width="1" height="1.5" fill="#d4d4d4" opacity="0.4"/><rect x="21" y="40" width="7" height="1.5" fill="#dcdcaa" opacity="0.4"/><rect x="28" y="40" width="2" height="1.5" fill="#d4d4d4" opacity="0.4"/><rect x="30" y="40" width="7" height="1.5" fill="#b5cea8" opacity="0.4"/><rect x="37" y="40" width="1" height="1.5" fill="#d4d4d4" opacity="0.4"/><rect x="39" y="40" width="1" height="1.5" fill="#d4d4d4" opacity="0.4"/><rect x="40" y="40" width="6" height="1.5" fill="#b5cea8" opacity="0.4"/><rect x="46" y="40" width="1" height="1.5" fill="#d4d4d4" opacity="0.4"/><rect x="48" y="40" width="5" height="1.5" fill="#b5cea8" opacity="0.4"/><rect x="53" y="40" width="2" height="1.5" fill="#d4d4d4" opacity="0.4"/><rect x="8" y="42" width="9" height="1.5" fill="#d4d4d4" opacity="0.4"/><rect x="18" y="42" width="1" height="1.5" fill="#d4d4d4" opacity="0.4"/><rect x="20" y="42" width="7" height="1.5" fill="#dcdcaa" opacity="0.4"/><rect x="27" y="42" width="2" height="1.5" fill="#d4d4d4" opacity="0.4"/><rect x="29" y="42" width="7" height="1.5" fill="#b5cea8" opacity="0.4"/><rect x="36" y="42" width="1" height="1.5" fill="#d4d4d4" opacity="0.4"/><rect x="38" y="42" width="1" height="1.5" fill="#d4d4d4" opacity="0.4"/><rect x="39" y="42" width="6" height="1.5" fill="#b5cea8" opacity="0.4"/><rect x="45" y="42" width="1" height="1.5" fill="#d4d4d4" opacity="0.4"/><rect x="47" y="42" width="5" height="1.5" fill="#b5cea8" opacity="0.4"/><rect x="52" y="42" width="1" height="1.5" fill="#d4d4d4" opacity="0.4"/><rect x="4" y="44" width="2" height="1.5" fill="#d4d4d4" opacity="0.4"/><rect x="4" y="46" width="1" height="1.5" fill="#d4d4d4" opacity="0.4"/><rect x="8" y="48" width="4" height="1.5" fill="#d4d4d4" opacity="0.4"/><rect x="13" y="48" width="1" height="1.5" fill="#d4d4d4" opacity="0.4"/><rect x="15" y="48" width="6" height="1.5" fill="#ce9178" opacity="0.4"/><rect x="22" y="48" width="5" height="1.5" fill="#ce9178" opacity="0.4"/><rect x="27" y="48" width="1" height="1.5" fill="#d4d4d4" opacity="0.4"/><rect x="8" y="50" width="9" height="1.5" fill="#d4d4d4" opacity="0.4"/><rect x="18" y="50" width="1" height="1.5" fill="#d4d4d4" opacity="0.4"/><rect x="20" y="50" width="7" height="1.5" fill="#dcdcaa" opacity="0.4"/><rect x="27" y="50" width="2" height="1.5" fill="#d4d4d4" opacity="0.4"/><rect x="29" y="50" width="7" height="1.5" fill="#b5cea8" opacity="0.4"/><rect x="36" y="50" width="1" height="1.5" fill="#d4d4d4" opacity="0.4"/><rect x="38" y="50" width="1" height="1.5" fill="#d4d4d4" opacity="0.4"/><rect x="39" y="50" width="7" height="1.5" fill="#b5cea8" opacity="0.4"/><rect x="46" y="50" width="1" height="1.5" fill="#d4d4d4" opacity="0.4"/><rect x="48" y="50" width="4" height="1.5" fill="#b5cea8" opacity="0.4"/><rect x="52" y="50" width="2" height="1.5" fill="#d4d4d4" opacity="0.4"/><rect x="8" y="52" width="10" height="1.5" fill="#d4d4d4" opacity="0.4"/><rect x="19" y="52" width="1" height="1.5" fill="#d4d4d4" opacity="0.4"/><rect x="21" y="52" width="7" height="1.5" fill="#dcdcaa" opacity="0.4"/><rect x="28" y="52" width="2" height="1.5" fill="#d4d4d4" opacity="0.4"/><rect x="30" y="52" width="7" height="1.5" fill="#b5cea8" opacity="0.4"/><rect x="37" y="52" width="1" height="1.5" fill="#d4d4d4" opacity="0.4"/><rect x="39" y="52" width="1" height="1.5" fill="#d4d4d4" opacity="0.4"/><rect x="40" y="52" width="7" height="1.5" fill="#b5cea8" opacity="0.4"/><rect x="47" y="52" width="1" height="1.5" fill="#d4d4d4" opacity="0.4"/><rect x="49" y="52" width="4" height="1.5" fill="#b5cea8" opacity="0.4"/><rect x="53" y="52" width="2" height="1.5" fill="#d4d4d4" opacity="0.4"/><rect x="8" y="54" width="9" height="1.5" fill="#d4d4d4" opacity="0.4"/><rect x="18" y="54" width="1" height="1.5" fill="#d4d4d4" opacity="0.4"/><rect x="20" y="54" width="7" height="1.5" fill="#dcdcaa" opacity="0.4"/><rect x="27" y="54" width="2" height="1.5" fill="#d4d4d4" opacity="0.4"/><rect x="29" y="54" width="8" height="1.5" fill="#b5cea8" opacity="0.4"/><rect x="37" y="54" width="1" height="1.5" fill="#d4d4d4" opacity="0.4"/><rect x="39" y="54" width="1" height="1.5" fill="#d4d4d4" opacity="0.4"/><rect x="40" y="54" width="8" height="1.5" fill="#b5cea8" opacity="0.4"/><rect x="48" y="54" width="1" height="1.5" fill="#d4d4d4" opacity="0.4"/><rect x="50" y="54" width="1" height="1.5" fill="#d4d4d4" opacity="0.4"/><rect x="51" y="54" width="6" height="1.5" fill="#b5cea8" opacity="0.4"/><rect x="57" y="54" width="1" height="1.5" fill="#d4d4d4" opacity="0.4"/><rect x="4" y="56" width="2" height="1.5" fill="#d4d4d4" opacity="0.4"/><rect x="4" y="58" width="1" height="1.5" fill="#d4d4d4" opacity="0.4"/><rect x="8" y="60" width="4" height="1.5" fill="#d4d4d4" opacity="0.4"/><rect x="13" y="60" width="1" height="1.5" fill="#d4d4d4" opacity="0.4"/><rect x="15" y="60" width="8" height="1.5" fill="#ce9178" opacity="0.4"/><rect x="24" y="60" width="7" height="1.5" fill="#ce9178" opacity="0.4"/><rect x="31" y="60" width="1" height="1.5" fill="#d4d4d4" opacity="0.4"/><rect x="8" y="62" width="9" height="1.5" fill="#d4d4d4" opacity="0.4"/><rect x="18" y="62" width="1" height="1.5" fill="#d4d4d4" opacity="0.4"/><rect x="20" y="62" width="7" height="1.5" fill="#dcdcaa" opacity="0.4"/><rect x="27" y="62" width="2" height="1.5" fill="#d4d4d4" opacity="0.4"/><rect x="29" y="62" width="7" height="1.5" fill="#b5cea8" opacity="0.4"/><rect x="36" y="62" width="1" height="1.5" fill="#d4d4d4" opacity="0.4"/><rect x="38" y="62" width="1" height="1.5" fill="#d4d4d4" opacity="0.4"/><rect x="39" y="62" width="6" height="1.5" fill="#b5cea8" opacity="0.4"/><rect x="45" y="62" width="1" height="1.5" fill="#d4d4d4" opacity="0.4"/><rect x="47" y="62" width="5" height="1.5" fill="#b5cea8" opacity="0.4"/><rect x="52" y="62" width="2" height="1.5" fill="#d4d4d4" opacity="0.4"/><rect x="8" y="64" width="10" height="1.5" fill="#d4d4d4" opacity="0.4"/><rect x="19" y="64" width="1" height="1.5" fill="#d4d4d4" opacity="0.4"/><rect x="21" y="64" width="7" height="1.5" fill="#dcdcaa" opacity="0.4"/><rect x="28" y="64" width="2" height="1.5" fill="#d4d4d4" opacity="0.4"/><rect x="30" y="64" width="7" height="1.5" fill="#b5cea8" opacity="0.4"/><rect x="37" y="64" width="1" height="1.5" fill="#d4d4d4" opacity="0.4"/><rect x="39" y="64" width="1" height="1.5" fill="#d4d4d4" opacity="0.4"/><rect x="40" y="64" width="6" height="1.5" fill="#b5cea8" opacity="0.4"/><rect x="46" y="64" width="1" height="1.5" fill="#d4d4d4" opacity="0.4"/><rect x="48" y="64" width="5" height="1.5" fill="#b5cea8" opacity="0.4"/><rect x="53" y="64" width="2" height="1.5" fill="#d4d4d4" opacity="0.4"/><rect x="8" y="66" width="9" height="1.5" fill="#d4d4d4" opacity="0.4"/><rect x="18" y="66" width="1" height="1.5" fill="#d4d4d4" opacity="0.4"/><rect x="20" y="66" width="7" height="1.5" fill="#dcdcaa" opacity="0.4"/><rect x="27" y="66" width="2" height="1.5" fill="#d4d4d4" opacity="0.4"/><rect x="29" y="66" width="6" height="1.5" fill="#b5cea8" opacity="0.4"/><rect x="35" y="66" width="1" height="1.5" fill="#d4d4d4" opacity="0.4"/><rect x="37" y="66" width="1" height="1.5" fill="#d4d4d4" opacity="0.4"/><rect x="38" y="66" width="7" height="1.5" fill="#b5cea8" opacity="0.4"/><rect x="45" y="66" width="1" height="1.5" fill="#d4d4d4" opacity="0.4"/><rect x="47" y="66" width="1" height="1.5" fill="#d4d4d4" opacity="0.4"/><rect x="48" y="66" width="5" height="1.5" fill="#b5cea8" opacity="0.4"/><rect x="53" y="66" width="1" height="1.5" fill="#d4d4d4" opacity="0.4"/><rect x="4" y="68" width="2" height="1.5" fill="#d4d4d4" opacity="0.4"/><rect x="4" y="70" width="1" height="1.5" fill="#d4d4d4" opacity="0.4"/><rect x="8" y="72" width="4" height="1.5" fill="#d4d4d4" opacity="0.4"/><rect x="13" y="72" width="1" height="1.5" fill="#d4d4d4" opacity="0.4"/><rect x="15" y="72" width="4" height="1.5" fill="#ce9178" opacity="0.4"/><rect x="20" y="72" width="7" height="1.5" fill="#ce9178" opacity="0.4"/><rect x="27" y="72" width="1" height="1.5" fill="#d4d4d4" opacity="0.4"/><rect x="8" y="74" width="9" height="1.5" fill="#d4d4d4" opacity="0.4"/><rect x="18" y="74" width="1" height="1.5" fill="#d4d4d4" opacity="0.4"/><rect x="20" y="74" width="7" height="1.5" fill="#dcdcaa" opacity="0.4"/><rect x="27" y="74" width="1" height="1.5" fill="#d4d4d4" opacity="0.4"/><rect x="28" y="74" width="6" height="1.5" fill="#b5cea8" opacity="0.4"/><rect x="34" y="74" width="1" height="1.5" fill="#d4d4d4" opacity="0.4"/><rect x="36" y="74" width="1" height="1.5" fill="#d4d4d4" opacity="0.4"/><rect x="37" y="74" width="6" height="1.5" fill="#b5cea8" opacity="0.4"/><rect x="43" y="74" width="1" height="1.5" fill="#d4d4d4" opacity="0.4"/><rect x="45" y="74" width="5" height="1.5" fill="#b5cea8" opacity="0.4"/><rect x="50" y="74" width="2" height="1.5" fill="#d4d4d4" opacity="0.4"/><rect x="8" y="76" width="10" height="1.5" fill="#d4d4d4" opacity="0.4"/><rect x="19" y="76" width="1" height="1.5" fill="#d4d4d4" opacity="0.4"/><rect x="21" y="76" width="7" height="1.5" fill="#dcdcaa" opacity="0.4"/><rect x="28" y="76" width="1" height="1.5" fill="#d4d4d4" opacity="0.4"/><rect x="29" y="76" width="6" height="1.5" fill="#b5cea8" opacity="0.4"/><rect x="35" y="76" width="1" height="1.5" fill="#d4d4d4" opacity="0.4"/><rect x="37" y="76" width="1" height="1.5" fill="#d4d4d4" opacity="0.4"/><rect x="38" y="76" width="6" height="1.5" fill="#b5cea8" opacity="0.4"/><rect x="44" y="76" width="1" height="1.5" fill="#d4d4d4" opacity="0.4"/><rect x="46" y="76" width="5" height="1.5" fill="#b5cea8" opacity="0.4"/><rect x="51" y="76" width="2" height="1.5" fill="#d4d4d4" opacity="0.4"/><rect x="8" y="78" width="9" height="1.5" fill="#d4d4d4" opacity="0.4"/><rect x="18" y="78" width="1" height="1.5" fill="#d4d4d4" opacity="0.4"/><rect x="20" y="78" width="7" height="1.5" fill="#dcdcaa" opacity="0.4"/><rect x="27" y="78" width="1" height="1.5" fill="#d4d4d4" opacity="0.4"/><rect x="28" y="78" width="6" height="1.5" fill="#b5cea8" opacity="0.4"/><rect x="34" y="78" width="1" height="1.5" fill="#d4d4d4" opacity="0.4"/><rect x="36" y="78" width="1" height="1.5" fill="#d4d4d4" opacity="0.4"/><rect x="37" y="78" width="6" height="1.5" fill="#b5cea8" opacity="0.4"/><rect x="43" y="78" width="1" height="1.5" fill="#d4d4d4" opacity="0.4"/><rect x="45" y="78" width="6" height="1.5" fill="#b5cea8" opacity="0.4"/><rect x="51" y="78" width="1" height="1.5" fill="#d4d4d4" opacity="0.4"/><rect x="4" y="80" width="1" height="1.5" fill="#d4d4d4" opacity="0.4"/><rect x="0" y="82" width="1" height="1.5" fill="#d4d4d4" opacity="0.4"/></g></svg>
<div class="abs" style="left:1906px;top:87px;width:14px;height:506px;background:rgba(121,121,121,0.4)"></div>
<div class="abs" style="left:1906px;top:87px;width:1px;height:931px;background:rgba(127,127,127,0.3)"></div>
<div class="abs" style="left:1907px;top:87px;width:13px;height:2px;background:rgba(160,160,160,0.8)"></div>
<div class="abs" style="left:1911px;top:87px;width:5px;height:10px;background:rgba(160,160,160,0.8)"></div>
<div class="abs" style="left:0;top:1018px;width:1920px;height:22px;background:#68217a"></div>
<svg style="left:15px;top:1022px" width="14" height="14" viewBox="0 0 14 14" fill="none" stroke="#ffffff" stroke-width="1.1">
<circle cx="6.6" cy="6.5" r="5.7"/><path d="M4.3 4.2 L8.9 8.8 M8.9 4.2 L4.3 8.8"/></svg>
<span id="s0" class="ui" style="left:33.00px;top:1024.00px;font-size:12px;color:#ffffff;font-weight:normal;transform:scaleX(0.8972);">0</span>
<svg style="left:42px;top:1022px" width="14" height="14" viewBox="0 0 14 14" fill="none" stroke="#ffffff" stroke-width="1.1">
<path d="M7 1.2 L12.8 12 H1.2 Z" stroke-linejoin="round"/><path d="M7 4.5 V8.8 M7 9.8 V10.8"/></svg>
<span id="s1" class="ui" style="left:59.40px;top:1024.00px;font-size:12px;color:#ffffff;font-weight:normal;transform:scaleX(0.9271);">0</span>
<span id="st0" class="ui" style="left:1588.00px;top:1024.00px;font-size:12px;color:#ffffff;font-weight:normal;transform:scaleX(0.9580);">Ln 1, Col 12</span>
<span id="st1" class="ui" style="left:1666.00px;top:1024.00px;font-size:12px;color:#ffffff;font-weight:normal;transform:scaleX(0.9213);">Tab Size: 4</span>
<span id="st2" class="ui" style="left:1737.00px;top:1024.00px;font-size:12px;color:#ffffff;font-weight:normal;transform:scaleX(0.9118);">UTF-8</span>
<span id="st3" class="ui" style="left:1784.50px;top:1024.00px;font-size:12px;color:#ffffff;font-weight:normal;transform:scaleX(0.8136);">CRLF</span>
<span id="st4" class="ui" style="left:1826.60px;top:1024.00px;font-size:12px;color:#ffffff;font-weight:normal;transform:scaleX(0.9186);">Lua</span>
<svg style="left:1861px;top:1022px" width="15" height="14" viewBox="0 0 15 14" fill="none" stroke="#ffffff" stroke-width="1.1">
<circle cx="5" cy="6.4" r="2.5"/><path d="M0.9 13.2 Q1.5 9.4 5 9.4 Q8.5 9.4 9.2 13.2"/><path d="M4.8 2.8 V0.9 H13.5 V7 H11 L9.2 8.8 V7"/></svg>
<svg style="left:1891px;top:1022px" width="14" height="14" viewBox="0 0 14 14" fill="none" stroke="#ffffff" stroke-width="1.1">
<path d="M2.5 11 V6 Q2.5 1.3 7 1.3 Q11.5 1.3 11.5 6 V11 Z"/><path d="M1.3 11 H12.7"/><path d="M5.5 12.8 H8.5"/></svg>
</body></html>
